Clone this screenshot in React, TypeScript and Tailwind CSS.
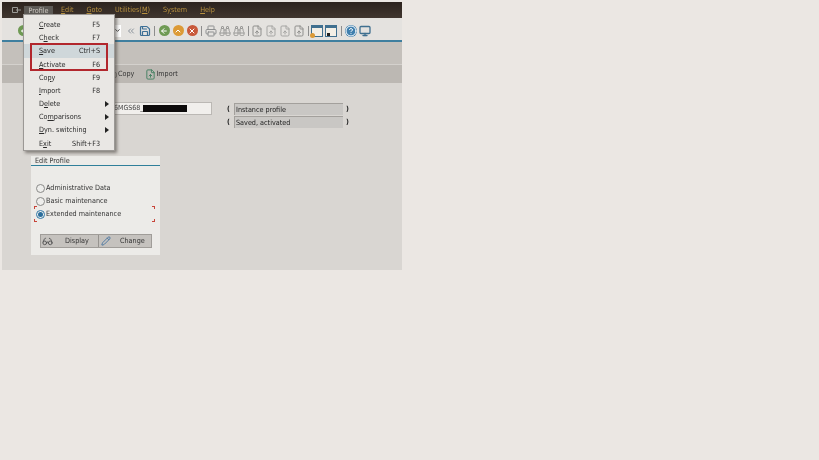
import type { ReactNode } from 'react';
import { ArrowLeft, ChevronsLeft, ChevronDown, Save, X, ChevronUp, Printer, Binoculars, HelpCircle, Monitor, Pencil, Glasses, FileUp, Copy } from 'lucide-react';

const menuItems = [
  { label: 'Create', key: 'C', shortcut: 'F5' },
  { label: 'Check', key: 'h', shortcut: 'F7' },
  { label: 'Save', key: 'S', shortcut: 'Ctrl+S', active: true },
  { label: 'Activate', key: 'A', shortcut: 'F6' },
  { label: 'Copy', key: 'p', shortcut: 'F9' },
  { label: 'Import', key: 'I', shortcut: 'F8' },
  { label: 'Delete', key: 'e', sub: true },
  { label: 'Comparisons', key: 'm', sub: true },
  { label: 'Dyn. switching', key: 'D', sub: true },
  { label: 'Exit', key: 'x', shortcut: 'Shift+F3' },
];

function Underlined({ label, letter }: { label: string; letter: string }) {
  const i = label.indexOf(letter);
  return (
    <>
      {label.slice(0, i)}
      <span className="underline">{letter}</span>
      {label.slice(i + 1)}
    </>
  );
}

function ProfileMenu() {
  return (
    <div className="absolute left-[21px] top-[12px] w-[92px] h-[137px] bg-[#e9e7e4] border border-[#9b9895] shadow-[2px_2px_3px_rgba(60,55,50,0.55)] pt-[3px] text-[7.2px] text-[#2a2a2a]">
      {menuItems.map((item) => (
        <div
          key={item.label}
          className={`h-[13.2px] flex items-center justify-between pl-[15px] pr-[14px] leading-none ${item.active ? 'bg-[#cfd7da]' : ''}`}
        >
          <span><Underlined label={item.label} letter={item.key} /></span>
          {item.shortcut && <span>{item.shortcut}</span>}
          {item.sub && <span className="w-0 h-0 -mr-[9px] border-y-[3px] border-y-transparent border-l-[4px] border-l-[#222]" />}
        </div>
      ))}
      <div className="absolute left-[6px] top-[28px] w-[78px] h-[28px] border-2 border-[#b2272d]" />
    </div>
  );
}

function Dot({ color, children }: { color: string; children: ReactNode }) {
  return (
    <span className={`w-[11px] h-[11px] rounded-full flex items-center justify-center text-white ${color}`}>
      {children}
    </span>
  );
}

function Sep({ w }: { w: string }) {
  return (
    <span className={`${w} flex justify-center`}>
      <span className="w-px h-[10px] bg-[#8d8d8d]" />
    </span>
  );
}

function Slot({ children }: { children: ReactNode }) {
  return <span className="w-[14px] flex justify-center items-center">{children}</span>;
}

function MainToolbar() {
  return (
    <div className="h-[24px] bg-[#e4e2df] border-b-2 border-[#3f7f9f] flex items-center pl-[16px] pt-[3px] shrink-0">
      <Dot color="bg-[#6f9a54]"><ArrowLeft size={8} strokeWidth={3} /></Dot>
      <span className="w-[92px] flex justify-end items-center">
        <span className="w-[8px] h-[12px] bg-white flex items-center justify-center text-[#333]">
          <ChevronDown size={7} strokeWidth={3} />
        </span>
      </span>
      <div className="flex items-center ml-[3px]">
        <Slot><ChevronsLeft size={10} className="text-[#75808a]" /></Slot>
        <Slot><Save size={12} className="text-[#3c6f96]" strokeWidth={2.4} /></Slot>
        <Sep w="w-[5px]" />
        <Slot><Dot color="bg-[#6f9a54]"><ArrowLeft size={8} strokeWidth={3} /></Dot></Slot>
        <Slot><Dot color="bg-[#dc9a36]"><ChevronUp size={8} strokeWidth={3} /></Dot></Slot>
        <Slot><Dot color="bg-[#c8583a]"><X size={8} strokeWidth={3} /></Dot></Slot>
        <Sep w="w-[5px]" />
        <Slot><Printer size={12} className="text-[#8d8f90]" /></Slot>
        <Slot><Binoculars size={12} className="text-[#9a9a98]" /></Slot>
        <Slot><Binoculars size={12} className="text-[#9a9a98]" /></Slot>
        <Sep w="w-[4px]" />
        <Slot><FileUp size={12} className="text-[#8f8f8d]" /></Slot>
        <Slot><FileUp size={12} className="text-[#a5a5a3]" /></Slot>
        <Slot><FileUp size={12} className="text-[#a5a5a3]" /></Slot>
        <Slot><FileUp size={12} className="text-[#8f8f8d]" /></Slot>
        <Sep w="w-[4px]" />
        <Slot>
          <span className="relative w-[12px] h-[12px] bg-[#f3efe6] border-[1.5px] border-t-[3px] border-[#3f6f8f]">
            <span className="absolute -left-[2px] -bottom-[2px] w-[5px] h-[5px] rounded-full bg-[#dc9a36]" />
          </span>
        </Slot>
        <Slot>
          <span className="relative w-[12px] h-[12px] bg-[#f3efe6] border-[1.5px] border-t-[3px] border-[#3f6f8f]">
            <span className="absolute left-[1px] bottom-0 w-[3px] h-[3px] bg-[#222]" />
          </span>
        </Slot>
        <Sep w="w-[6px]" />
        <Slot><HelpCircle size={12} className="text-white bg-[#3f7fae] rounded-full" /></Slot>
        <Slot><Monitor size={12} className="text-[#3f6f8f]" strokeWidth={2.6} /></Slot>
      </div>
    </div>
  );
}

function TitleBar() {
  return (
    <div className="h-[16px] bg-gradient-to-b from-[#2c231e] to-[#40362f] flex items-center text-[7.2px] text-[#b8913f] shrink-0">
      <svg width="9" height="8" viewBox="0 0 9 8" className="ml-[10px] text-[#9a9a96]" fill="none" stroke="currentColor">
        <path d="M0.5 1.5h5v5h-5zM4 4h5" />
      </svg>
      <div className="ml-[3px] w-[29px] h-[12px] mt-[4px] bg-[#5d5a56] text-center text-[#cfcac4] leading-[10px]">
        <Underlined label="Profile" letter="P" />
      </div>
      <div className="flex gap-[13px] ml-[8px]">
        <span><Underlined label="Edit" letter="E" /></span>
        <span><Underlined label="Goto" letter="G" /></span>
        <span>Utilities(<span className="underline">M</span>)</span>
        <span><Underlined label="System" letter="y" /></span>
        <span><Underlined label="Help" letter="H" /></span>
      </div>
    </div>
  );
}

function StatusField({ children }: { children: ReactNode }) {
  return (
    <div className="flex items-center h-[12px] text-[7.2px] text-[#222]">
      <span className="w-[7px] text-[7px] font-bold">(</span>
      <span className="w-[109px] h-[12px] bg-[#c9c7c4] border-t border-l border-[#a3a09c] pl-[1px] leading-[11px]">{children}</span>
      <span className="ml-[3px] text-[7px] font-bold">)</span>
    </div>
  );
}

function Radio({ label, checked }: { label: string; checked?: boolean }) {
  return (
    <div className="h-[13px] flex items-center gap-[1px] pl-[5px] text-[7.2px] text-[#333]">
      <span className={`w-[9px] h-[9px] rounded-full border bg-[#eeeeec] flex items-center justify-center ${checked ? 'border-[#2e76a6]' : 'border-[#8a8a88]'}`}>
        {checked && <span className="w-[5px] h-[5px] rounded-full bg-[#2a6d9b]" />}
      </span>
      {label}
    </div>
  );
}

function EditProfile() {
  return (
    <div className="w-[129px] h-[99px] bg-[#ecebe8] mt-[28px] ml-[29px] text-[7.2px] text-[#333]">
      <div className="h-[10px] border-b border-[#2f7f9a] pl-[4px] leading-[9px]">Edit Profile</div>
      <div className="relative mt-[16px]">
        <Radio label="Administrative Data" />
        <Radio label="Basic maintenance" />
        <Radio label="Extended maintenance" checked />
        <span className="absolute left-[3px] top-[24px] w-[3px] h-[3px] border-l border-t border-[#c8453a]" />
        <span className="absolute left-[3px] top-[37px] w-[3px] h-[3px] border-l border-b border-[#c8453a]" />
        <span className="absolute right-[5px] top-[24px] w-[3px] h-[3px] border-r border-t border-[#c8453a]" />
        <span className="absolute right-[5px] top-[37px] w-[3px] h-[3px] border-r border-b border-[#c8453a]" />
      </div>
      <div className="flex mt-[13px] ml-[9px] w-[112px] h-[14px] bg-[#c5c2be] border border-[#a09d99]">
        <div className="w-[58px] flex items-center border-r border-[#96938f]">
          <Glasses size={11} className="ml-[1px] text-[#555]" />
          <span className="ml-[12px]">Display</span>
        </div>
        <div className="flex-1 flex items-center">
          <Pencil size={10} className="ml-[2px] text-[#3f6f9f]" />
          <span className="ml-[9px]">Change</span>
        </div>
      </div>
    </div>
  );
}

export default function App() {
  return (
    <div className="w-[819px] h-[460px] bg-[#ebe7e3] pt-[2px] pl-[2px] font-['DejaVu_Sans',sans-serif] font-stretch-condensed overflow-hidden">
      <div className="relative w-[400px] h-[268px] flex flex-col bg-[#d9d6d2] blur-[0.3px]">
        <TitleBar />
        <MainToolbar />
        <div className="h-[22px] bg-[#c4c0bb] shrink-0" />
        <div className="h-[19px] bg-[#bcb8b3] border-t border-[#d4d1cd] shrink-0 flex items-center pl-[107px] pt-[1px] text-[7.2px] text-[#333]">
          <span className="flex items-center gap-[1px]"><Copy size={8} className="text-[#555]" />Copy</span>
          <span className="flex items-center ml-[11px]"><FileUp size={11} className="text-[#3f7f5f]" />Import</span>
        </div>
        <div className="flex-1 min-h-0">
          <div className="flex pt-[20px]">
            <div className="ml-[110px] -mt-[1px] w-[100px] h-[13px] bg-[#f1efec] border border-[#bbb8b4] relative text-[7px] text-[#444] leading-[11px] overflow-hidden">
              <span className="pl-[1px]">6MGS68_</span>
              <span className="absolute left-[30px] top-[2px] w-[44px] h-[7px] bg-[#0d0b0b]" />
            </div>
            <div className="ml-[15px] flex flex-col gap-[1px]">
              <StatusField>Instance profile</StatusField>
              <StatusField>Saved, activated</StatusField>
            </div>
          </div>
          <EditProfile />
        </div>
        <ProfileMenu />
      </div>
    </div>
  );
}
